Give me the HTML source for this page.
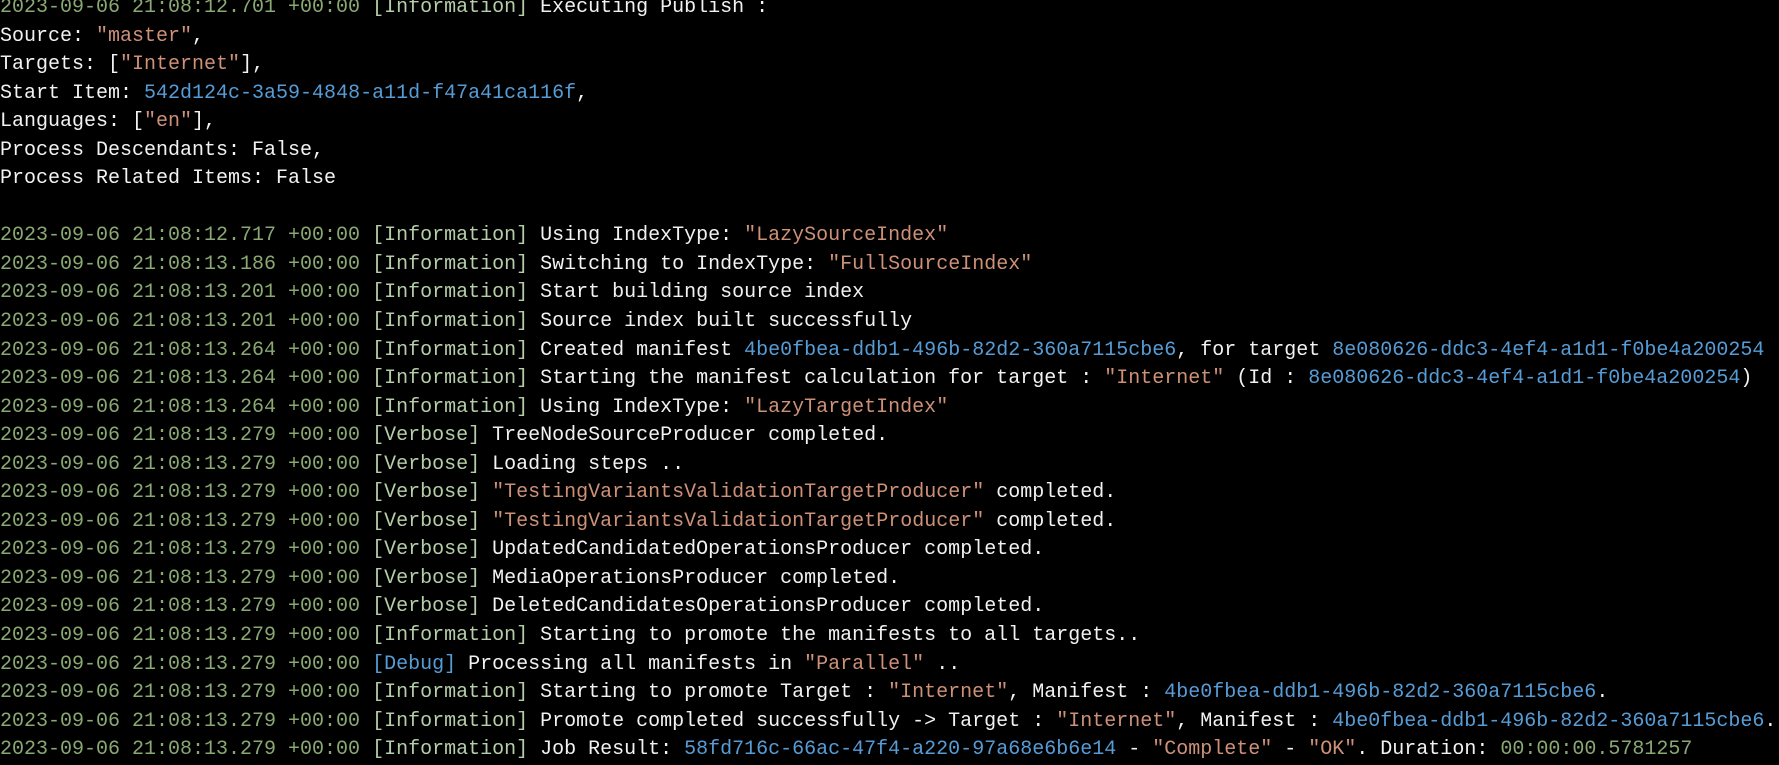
<!DOCTYPE html>
<html><head><meta charset="utf-8"><style>
html,body{margin:0;padding:0;background:#000;width:1779px;height:762px;overflow:hidden}
pre{margin:0;position:absolute;top:-6px;left:0;font-family:"Liberation Mono",monospace;font-size:20px;line-height:28.54px;color:#f2f2f2;white-space:pre}
.t{color:#8aa872}.i{color:#b5cea8}.d{color:#569cd6}.s{color:#ce9178}.g{color:#569cd6}
</style></head><body><pre><span class="t">2023-09-06 21:08:12.701 +00:00</span> <span class="i">[Information]</span> Executing Publish :
Source: <span class="s">"master"</span>,
Targets: [<span class="s">"Internet"</span>],
Start Item: <span class="g">542d124c-3a59-4848-a11d-f47a41ca116f</span>,
Languages: [<span class="s">"en"</span>],
Process Descendants: False,
Process Related Items: False

<span class="t">2023-09-06 21:08:12.717 +00:00</span> <span class="i">[Information]</span> Using IndexType: <span class="s">"LazySourceIndex"</span>
<span class="t">2023-09-06 21:08:13.186 +00:00</span> <span class="i">[Information]</span> Switching to IndexType: <span class="s">"FullSourceIndex"</span>
<span class="t">2023-09-06 21:08:13.201 +00:00</span> <span class="i">[Information]</span> Start building source index
<span class="t">2023-09-06 21:08:13.201 +00:00</span> <span class="i">[Information]</span> Source index built successfully
<span class="t">2023-09-06 21:08:13.264 +00:00</span> <span class="i">[Information]</span> Created manifest <span class="g">4be0fbea-ddb1-496b-82d2-360a7115cbe6</span>, for target <span class="g">8e080626-ddc3-4ef4-a1d1-f0be4a200254</span>
<span class="t">2023-09-06 21:08:13.264 +00:00</span> <span class="i">[Information]</span> Starting the manifest calculation for target : <span class="s">"Internet"</span> (Id : <span class="g">8e080626-ddc3-4ef4-a1d1-f0be4a200254</span>)
<span class="t">2023-09-06 21:08:13.264 +00:00</span> <span class="i">[Information]</span> Using IndexType: <span class="s">"LazyTargetIndex"</span>
<span class="t">2023-09-06 21:08:13.279 +00:00</span> <span class="i">[Verbose]</span> TreeNodeSourceProducer completed.
<span class="t">2023-09-06 21:08:13.279 +00:00</span> <span class="i">[Verbose]</span> Loading steps ..
<span class="t">2023-09-06 21:08:13.279 +00:00</span> <span class="i">[Verbose]</span> <span class="s">"TestingVariantsValidationTargetProducer"</span> completed.
<span class="t">2023-09-06 21:08:13.279 +00:00</span> <span class="i">[Verbose]</span> <span class="s">"TestingVariantsValidationTargetProducer"</span> completed.
<span class="t">2023-09-06 21:08:13.279 +00:00</span> <span class="i">[Verbose]</span> UpdatedCandidatedOperationsProducer completed.
<span class="t">2023-09-06 21:08:13.279 +00:00</span> <span class="i">[Verbose]</span> MediaOperationsProducer completed.
<span class="t">2023-09-06 21:08:13.279 +00:00</span> <span class="i">[Verbose]</span> DeletedCandidatesOperationsProducer completed.
<span class="t">2023-09-06 21:08:13.279 +00:00</span> <span class="i">[Information]</span> Starting to promote the manifests to all targets..
<span class="t">2023-09-06 21:08:13.279 +00:00</span> <span class="d">[Debug]</span> Processing all manifests in <span class="s">"Parallel"</span> ..
<span class="t">2023-09-06 21:08:13.279 +00:00</span> <span class="i">[Information]</span> Starting to promote Target : <span class="s">"Internet"</span>, Manifest : <span class="g">4be0fbea-ddb1-496b-82d2-360a7115cbe6</span>.
<span class="t">2023-09-06 21:08:13.279 +00:00</span> <span class="i">[Information]</span> Promote completed successfully -&gt; Target : <span class="s">"Internet"</span>, Manifest : <span class="g">4be0fbea-ddb1-496b-82d2-360a7115cbe6</span>.
<span class="t">2023-09-06 21:08:13.279 +00:00</span> <span class="i">[Information]</span> Job Result: <span class="g">58fd716c-66ac-47f4-a220-97a68e6b6e14</span> - <span class="s">"Complete"</span> - <span class="s">"OK"</span>. Duration: <span class="t">00:00:00.5781257</span></pre></body></html>
